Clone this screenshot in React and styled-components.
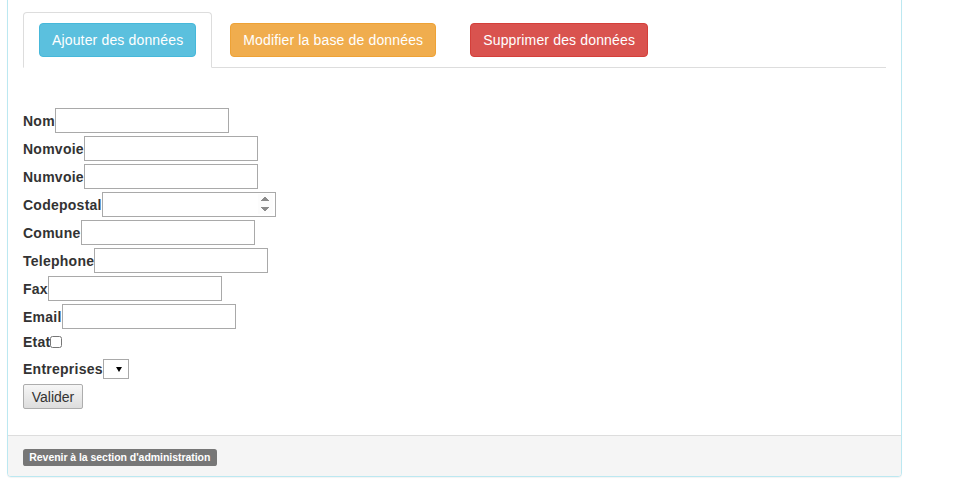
import styled, { createGlobalStyle } from "styled-components";

const GlobalStyle = createGlobalStyle`
  html, body {
    margin: 0;
    padding: 0;
    background: #fff;
  }
  body {
    font-family: "Liberation Sans", Arial, Helvetica, sans-serif;
    font-size: 14px;
    line-height: 1.42857;
    color: #333;
  }
  * { box-sizing: border-box; }
`;

const Page = styled.div`
  padding-left: 7px;
  height: 500px;
  overflow: hidden;
`;

const Panel = styled.div`
  width: 895px;
  margin-top: -4px;
  border: 1px solid #bce8f1;
  border-radius: 4px;
  background: #fff;
  box-shadow: 0 1px 1px rgba(0, 0, 0, 0.05);
`;

const Body = styled.div`
  padding: 15px;
`;

const Tabs = styled.ul`
  display: flex;
  list-style: none;
  margin: 0;
  padding: 0;
  border-bottom: 1px solid #ddd;
`;

const Tab = styled.li`
  margin-bottom: -1px;
  margin-right: 2px;
  padding: 10px 15px;
  border: 1px solid ${({ $active }) => ($active ? "#ddd" : "transparent")};
  border-bottom-color: ${({ $active }) => ($active ? "#fff" : "transparent")};
  border-radius: 4px 4px 0 0;
  background: ${({ $active }) => ($active ? "#fff" : "transparent")};
`;

const colors = {
  info: ["#5bc0de", "#46b8da"],
  warning: ["#f0ad4e", "#eea236"],
  danger: ["#d9534f", "#d43f3a"],
};

const TabButton = styled.button`
  display: block;
  font-family: inherit;
  font-size: 14px;
  line-height: 20px;
  letter-spacing: 0.15px;
  padding: 6px 12px;
  border-radius: 4px;
  color: #fff;
  cursor: pointer;
  background: ${({ $variant }) => colors[$variant][0]};
  border: 1px solid ${({ $variant }) => colors[$variant][1]};
`;

const Form = styled.form`
  padding-top: 40px;
  margin-bottom: 11px;
`;

const Row = styled.div`
  display: flex;
  align-items: ${({ $align }) => $align || "center"};
  height: ${({ $h }) => $h || 25}px;
  margin-bottom: ${({ $gap }) => ($gap === undefined ? 3 : $gap)}px;
`;

const Label = styled.label`
  font-weight: bold;
  line-height: 20px;
  letter-spacing: 0.25px;
  color: #333;
`;

const TextInput = styled.input`
  width: 174px;
  height: 25px;
  padding: 1px 2px;
  margin: 0;
  border: 1px solid #a9a9a9;
  font-family: inherit;
  font-size: 14px;
  background: #fff;
  outline: none;
  &::-webkit-inner-spin-button {
    opacity: 1;
    height: 21px;
  }
`;

const Check = styled.input`
  width: 12px;
  height: 12px;
  margin: 4px 0 0 0;
`;

const SelectWrap = styled.span`
  position: relative;
  display: inline-block;
  &::after {
    content: "";
    position: absolute;
    right: 7px;
    top: 8px;
    border-left: 3.5px solid transparent;
    border-right: 3.5px solid transparent;
    border-top: 5px solid #000;
    pointer-events: none;
  }
`;

const Select = styled.select`
  display: block;
  appearance: none;
  width: 26px;
  height: 20px;
  margin: 0;
  border: 1px solid #a9a9a9;
  border-radius: 0;
  background: #fff;
  font-family: inherit;
  font-size: 13px;
`;

const Submit = styled.button`
  display: block;
  width: 60px;
  height: 25px;
  padding: 1px 6px;
  font-family: inherit;
  font-size: 14px;
  color: #333;
  border: 1px solid #adadad;
  border-radius: 2px;
  background: linear-gradient(#f6f6f6, #dddddd);
`;

const Footer = styled.div`
  padding: 10px 15px;
  background: #f5f5f5;
  border-top: 1px solid #ddd;
  border-radius: 0 0 3px 3px;
  line-height: 20px;
`;

const Badge = styled.span`
  display: inline;
  padding: 0.2em 0.6em 0.3em;
  font-size: 75%;
  font-weight: bold;
  line-height: 1;
  letter-spacing: -0.05px;
  color: #fff;
  background: #777;
  border-radius: 0.25em;
  white-space: nowrap;
`;

const fields = [
  ["Nom", "text"],
  ["Nomvoie", "text"],
  ["Numvoie", "text"],
  ["Codepostal", "number"],
  ["Comune", "text"],
  ["Telephone", "text"],
  ["Fax", "text"],
  ["Email", "email"],
];

export default function App() {
  return (
    <Page>
      <GlobalStyle />
      <Panel>
        <Body>
          <Tabs>
            <Tab $active>
              <TabButton $variant="info">Ajouter des données</TabButton>
            </Tab>
            <Tab>
              <TabButton $variant="warning">Modifier la base de données</TabButton>
            </Tab>
            <Tab>
              <TabButton $variant="danger">Supprimer des données</TabButton>
            </Tab>
          </Tabs>

          <Form onSubmit={(e) => e.preventDefault()}>
            {fields.map(([name, type]) => (
              <Row key={name}>
                <Label htmlFor={name}>{name}</Label>
                <TextInput id={name} type={type} />
              </Row>
            ))}
            <Row $align="flex-start" $h={27} $gap={0}>
              <Label htmlFor="etat">Etat</Label>
              <Check id="etat" type="checkbox" />
            </Row>
            <Row $h={20} $gap={5}>
              <Label htmlFor="entreprises">Entreprises</Label>
              <SelectWrap>
                <Select id="entreprises" />
              </SelectWrap>
            </Row>
            <Submit type="submit">Valider</Submit>
          </Form>
        </Body>
        <Footer>
          <Badge>Revenir à la section d'administration</Badge>
        </Footer>
      </Panel>
    </Page>
  );
}
